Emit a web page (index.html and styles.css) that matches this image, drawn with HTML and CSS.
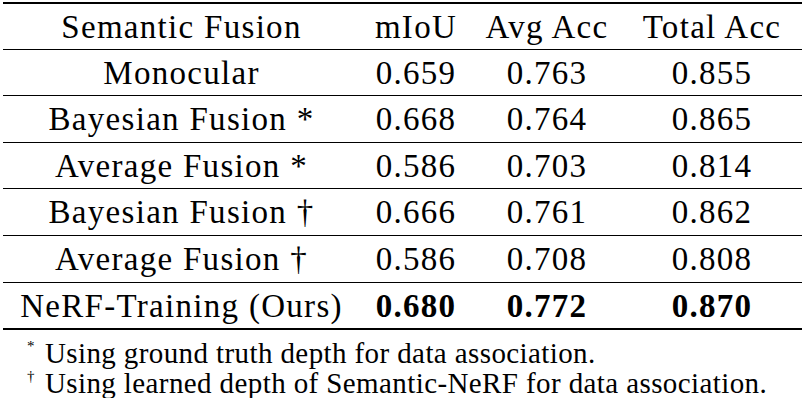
FILE: index.html
```html
<!DOCTYPE html>
<html>
<head>
<meta charset="utf-8">
<link rel="stylesheet" href="styles.css">
</head>
<body>
<div class="table">
  <div class="row head h46">
    <div class="c">Semantic Fusion</div><div class="c">mIoU</div><div class="c">Avg Acc</div><div class="c">Total Acc</div>
  </div>
  <div class="row h46">
    <div class="c">Monocular</div><div class="c">0.659</div><div class="c">0.763</div><div class="c">0.855</div>
  </div>
  <div class="row h47">
    <div class="c">Bayesian Fusion *</div><div class="c">0.668</div><div class="c">0.764</div><div class="c">0.865</div>
  </div>
  <div class="row h46">
    <div class="c">Average Fusion *</div><div class="c">0.586</div><div class="c">0.703</div><div class="c">0.814</div>
  </div>
  <div class="row h47">
    <div class="c">Bayesian Fusion †</div><div class="c">0.666</div><div class="c">0.761</div><div class="c">0.862</div>
  </div>
  <div class="row h47">
    <div class="c">Average Fusion †</div><div class="c">0.586</div><div class="c">0.708</div><div class="c">0.808</div>
  </div>
  <div class="row last">
    <div class="c">NeRF-Training (Ours)</div><div class="c b">0.680</div><div class="c b">0.772</div><div class="c b">0.870</div>
  </div>
</div>
<div class="notes">
  <p class="note"><sup class="mark">*</sup>Using ground truth depth for data association.</p>
  <p class="note"><sup class="mark">†</sup>Using learned depth of Semantic-NeRF for data association.</p>
</div>
</body>
</html>
```
FILE: styles.css
```css
html, body {
  margin: 0;
  padding: 0;
  background: #fff;
}
body {
  font-family: "Liberation Serif", "Times New Roman", serif;
  color: #000;
  padding: 2px 2px 0 3px;
}
.table {
  width: 799px;
  border-top: 2px solid #000;
}
.row {
  display: grid;
  grid-template-columns: 357px 112px 150px 180px;
  align-items: center;
  border-bottom: 1px solid #000;
  box-sizing: border-box;
  font-size: 33px;
  letter-spacing: 1.3px;
  line-height: 38px;
}
.h46 { height: 46px; }
.h47 { height: 47px; }
.last { height: 47px; border-bottom: 2px solid #000; }
.c {
  text-align: center;
  white-space: nowrap;
}
.b { font-weight: bold; }
.notes {
  padding-left: 24px;
  padding-top: 8px;
}
.note {
  margin: 0;
  font-size: 29px;
  line-height: 30px;
  letter-spacing: 0.4px;
  white-space: nowrap;
}
.mark {
  font-size: 15px;
  vertical-align: 12px;
  line-height: 0;
  margin-right: 10px;
}
```
